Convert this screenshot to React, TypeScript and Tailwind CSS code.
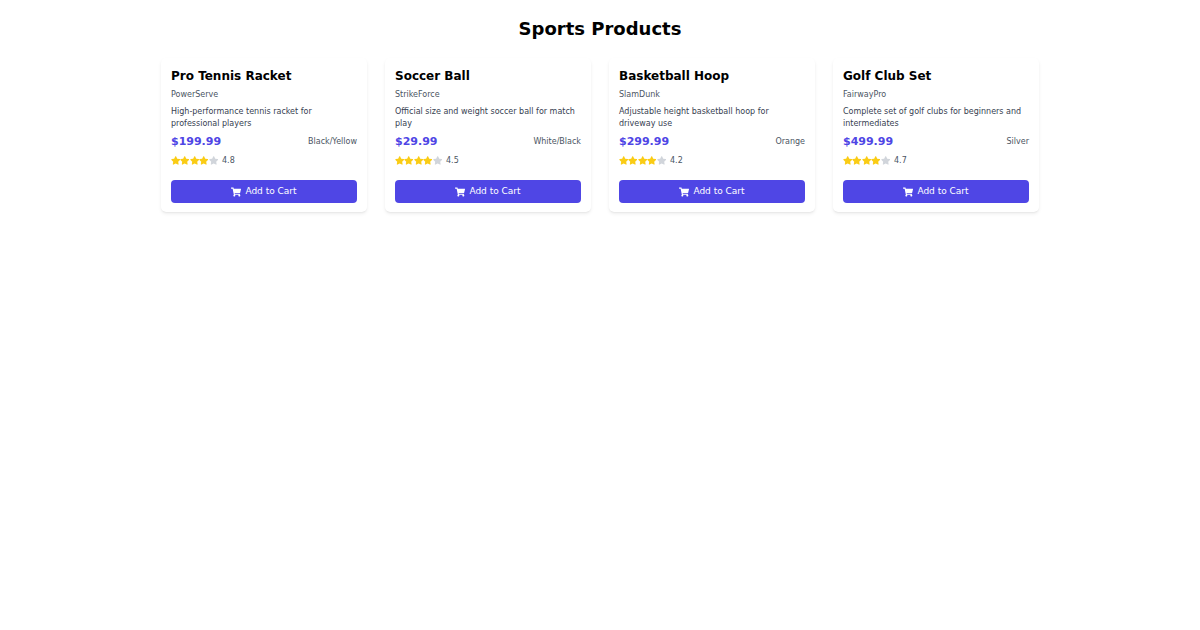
import { FaShoppingCart, FaStar } from "react-icons/fa";

type Product = {
  name: string;
  brand: string;
  description: string;
  price: number;
  color: string;
  rating: number;
};

const products: Product[] = [
  {
    name: "Pro Tennis Racket",
    brand: "PowerServe",
    description: "High-performance tennis racket for professional players",
    price: 199.99,
    color: "Black/Yellow",
    rating: 4.8,
  },
  {
    name: "Soccer Ball",
    brand: "StrikeForce",
    description: "Official size and weight soccer ball for match play",
    price: 29.99,
    color: "White/Black",
    rating: 4.5,
  },
  {
    name: "Basketball Hoop",
    brand: "SlamDunk",
    description: "Adjustable height basketball hoop for driveway use",
    price: 299.99,
    color: "Orange",
    rating: 4.2,
  },
  {
    name: "Golf Club Set",
    brand: "FairwayPro",
    description: "Complete set of golf clubs for beginners and intermediates",
    price: 499.99,
    color: "Silver",
    rating: 4.7,
  },
];

function Rating({ value }: { value: number }) {
  return (
    <div className="flex items-center gap-1">
      <div className="flex w-[47px]" aria-hidden="true">
        {[1, 2, 3, 4, 5].map((star) => (
          <FaStar
            key={star}
            className={
              star <= Math.floor(value)
                ? "h-[9px] min-w-0 flex-1 text-[#facc15]"
                : "h-[9px] min-w-0 flex-1 text-[#d1d5db]"
            }
          />
        ))}
      </div>
      <span className="text-[8px] leading-[13px] text-[#4b5563]">{value}</span>
    </div>
  );
}

function ProductCard({ product }: { product: Product }) {
  return (
    <article className="flex flex-col rounded-[5px] bg-white px-[10px] pt-[10px] pb-[9px] shadow-[0_2px_4px_-1px_rgba(0,0,0,0.1),0_1px_2px_-1px_rgba(0,0,0,0.1)]">
      <h2 className="mb-[5px] text-[12px] leading-[16px] font-bold text-black">{product.name}</h2>
      <p className="mb-[5px] text-[8px] leading-[12px] text-[#4b5563]">{product.brand}</p>
      <p className="mb-1 text-[8px] leading-[12px] text-[#374151]">{product.description}</p>
      <div className="mb-1 flex items-center justify-between">
        <span className="text-[11px] leading-[16px] font-bold text-[#4f46e5]">${product.price}</span>
        <span className="text-[8px] leading-[12px] text-[#4b5563]">{product.color}</span>
      </div>
      <Rating value={product.rating} />
      <button
        type="button"
        className="mt-[13px] flex h-[23px] items-center justify-center gap-1 rounded-[4px] bg-[#4f46e5] text-[9px] leading-[13px] text-white hover:bg-[#4338ca]"
      >
        <FaShoppingCart className="size-[10px]" aria-hidden="true" />
        Add to Cart
      </button>
    </article>
  );
}

export default function App() {
  return (
    <main className="min-h-screen bg-white px-4 py-[18px] font-['DejaVu_Sans',sans-serif]">
      <div className="mx-auto max-w-[878px]">
        <h1 className="mb-[19px] text-center text-[18px] leading-[21px] font-bold text-black">Sports Products</h1>
        <div className="grid grid-cols-1 gap-[18px] sm:grid-cols-2 lg:grid-cols-4">
          {products.map((product) => (
            <ProductCard key={product.name} product={product} />
          ))}
        </div>
      </div>
    </main>
  );
}
